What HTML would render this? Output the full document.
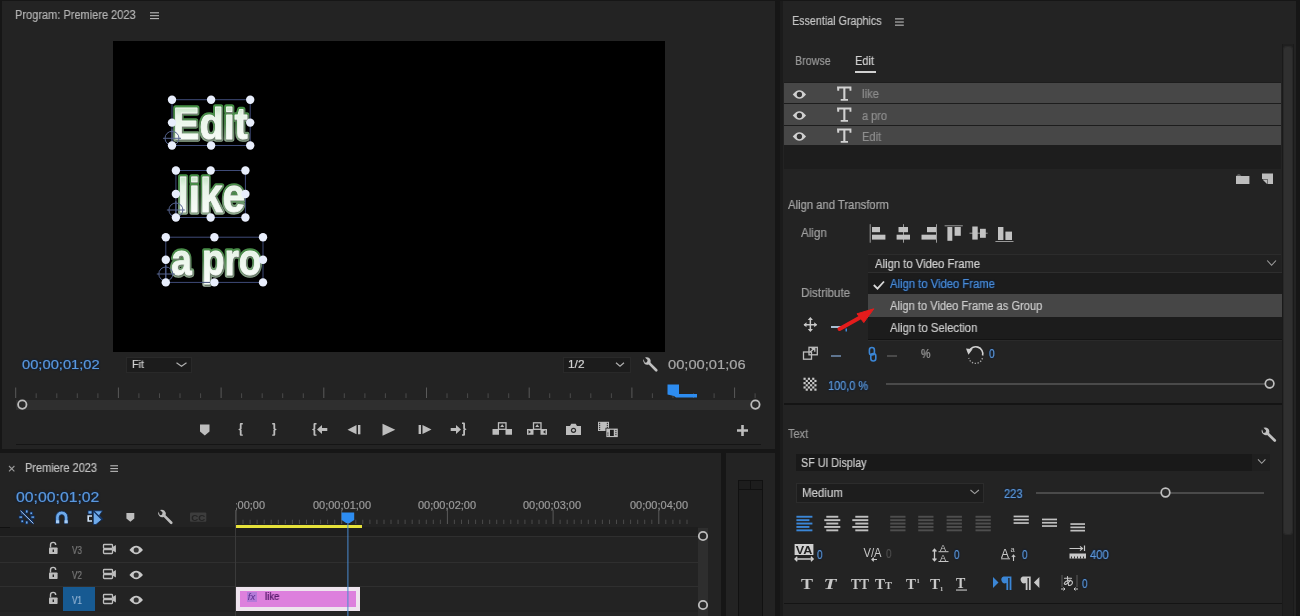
<!DOCTYPE html>
<html><head><meta charset="utf-8">
<style>
html,body{margin:0;padding:0;width:1300px;height:616px;overflow:hidden;background:#161616;}
body{position:relative;font-family:"Liberation Sans",sans-serif;color:#b4b4b4;}
.a{position:absolute;}
.t{position:absolute;white-space:nowrap;line-height:1;transform-origin:0 0;-webkit-text-stroke:0.2px currentColor;will-change:transform;}
.p{position:absolute;background:#232323;}
svg{position:absolute;overflow:visible;}
</style></head><body>

<!-- ===== Program monitor panel ===== -->
<div class="p" style="left:2px;top:1px;width:773px;height:448px;"></div>
<div class="a" style="left:113px;top:41px;width:552px;height:311px;background:#000;"></div>
<!-- dropdowns -->
<div class="a" style="left:126px;top:357px;width:64px;height:14px;background:#1c1c1c;border:1px solid #292929;"></div>
<div class="a" style="left:563px;top:357px;width:66px;height:14px;background:#1c1c1c;border:1px solid #292929;"></div>
<!-- scrub bar -->
<div class="a" style="left:16px;top:400px;width:744px;height:10px;background:#2f2f2f;"></div>
<!-- transport bottom line -->
<div class="a" style="left:16px;top:443.5px;width:745px;height:1.3px;background:#151515;"></div>

<!-- ===== Timeline panel ===== -->
<div class="p" style="left:0px;top:453px;width:721px;height:163px;"></div>
<div class="a" style="left:0px;top:527px;width:698px;height:8.5px;background:#1e1e1e;"></div><div class="a" style="left:0px;top:526.5px;width:10px;height:1px;background:#111;"></div>
<!-- track separators -->
<div class="a" style="left:0px;top:535.5px;width:698px;height:1px;background:#2f2f2f;"></div>
<div class="a" style="left:0px;top:561.5px;width:698px;height:1px;background:#2f2f2f;"></div>
<div class="a" style="left:0px;top:586px;width:698px;height:1px;background:#2f2f2f;"></div>
<div class="a" style="left:0px;top:611.5px;width:698px;height:5px;background:#262626;"></div>
<!-- V1 highlight -->
<div class="a" style="left:63px;top:587px;width:32px;height:24px;background:#175a92;"></div>
<!-- timeline start line -->
<div class="a" style="left:235px;top:510px;width:1px;height:106px;background:#3a3a3a;"></div>
<!-- vertical scrollbar -->
<div class="a" style="left:698px;top:528px;width:10px;height:88px;background:#2e2e2e;"></div>
<!-- yellow work area bar -->
<div class="a" style="left:236px;top:525px;width:126px;height:3px;background:#e6e23a;"></div>
<!-- clip -->
<div class="a" style="left:236px;top:587px;width:124px;height:24px;background:#eee4ee;"></div>
<div class="a" style="left:240px;top:590.5px;width:116px;height:16.5px;background:#dd80dd;"></div>
<div class="a" style="left:247px;top:592px;width:10px;height:9.5px;background:#b47ad8;"></div>

<!-- small audio meter panel -->
<div class="p" style="left:726px;top:453px;width:49px;height:163px;"></div>
<div class="a" style="left:737.5px;top:480px;width:25px;height:140px;background:#1d1d1d;border:1px solid #111;box-sizing:border-box;"></div>
<div class="a" style="left:738px;top:489px;width:24px;height:1px;background:#111;"></div>
<div class="a" style="left:750px;top:481px;width:1px;height:8px;background:#111;"></div>

<!-- ===== Essential graphics panel ===== -->
<div class="p" style="left:780px;top:1px;width:516px;height:615px;"></div>
<div class="a" style="left:780px;top:1px;width:3px;height:615px;background:#1b1b1b;"></div>
<!-- tab underline -->
<div class="a" style="left:855px;top:71px;width:21px;height:2px;background:#d0d0d0;"></div>
<!-- layer list -->
<div class="a" style="left:784px;top:82px;width:497px;height:87px;background:#1d1d1d;"></div>
<div class="a" style="left:784px;top:82.5px;width:497px;height:20.5px;background:#474747;"></div>
<div class="a" style="left:784px;top:104px;width:497px;height:20.5px;background:#474747;"></div>
<div class="a" style="left:784px;top:125.5px;width:497px;height:19.5px;background:#474747;"></div>
<!-- scrollbar -->
<div class="a" style="left:1281.5px;top:44px;width:12px;height:572px;background:#1f1f1f;border-left:1px solid #1a1a1a;border-right:1px solid #1a1a1a;box-sizing:border-box;"></div><div class="a" style="left:1282.5px;top:45.5px;width:10px;height:489px;background:#303030;border-radius:4px;box-shadow:inset 0 0 0 1px #282828;"></div>
<!-- align dropdown -->
<div class="a" style="left:868px;top:254px;width:413px;height:18px;background:#212121;border-top:1px solid #2c2c2c;"></div>
<!-- dropdown menu -->
<div class="a" style="left:868px;top:272px;width:414px;height:1px;background:#2e2e2e;"></div><div class="a" style="left:868px;top:273px;width:414px;height:65.5px;background:#1c1c1c;border-bottom:1.5px solid #131313;"></div><div class="a" style="left:868px;top:340px;width:414px;height:1px;background:#2a2a2a;"></div>
<div class="a" style="left:868px;top:294px;width:414px;height:22.5px;background:#464646;"></div>
<!-- blue dashes -->
<div class="a" style="left:830.5px;top:325.5px;width:10px;height:2px;background:#a9bdd2;"></div>
<div class="a" style="left:830.5px;top:355px;width:10px;height:1.8px;background:#5f7590;"></div>
<div class="a" style="left:886.5px;top:355px;width:10px;height:1.5px;background:#4a4a4a;"></div>
<!-- opacity slider -->
<div class="a" style="left:886px;top:383px;width:380px;height:2px;background:#4a4a4a;"></div>
<!-- separators -->
<div class="a" style="left:784px;top:403px;width:498px;height:2px;background:#141414;"></div>
<div class="a" style="left:784px;top:602.5px;width:498px;height:1.5px;background:#141414;"></div>
<!-- font dropdown -->
<div class="a" style="left:796px;top:453.5px;width:456px;height:17.5px;background:#191919;"></div>
<div class="a" style="left:1252px;top:453.5px;width:18px;height:17.5px;background:#1f1f1f;"></div>
<!-- medium dropdown -->
<div class="a" style="left:795.5px;top:483px;width:188px;height:19.5px;background:#1d1d1d;border:1px solid #2c2c2c;box-sizing:border-box;"></div>
<!-- size slider -->
<div class="a" style="left:1036px;top:491.5px;width:228px;height:2px;background:#4a4a4a;"></div>
<div class="t" style="left:14.78px;top:8.57px;font-size:12.5px;color:#b4b4b4;transform:scaleX(0.8811);">Program: Premiere 2023</div>
<div class="t" style="left:21.62px;top:358.24px;font-size:13.6px;color:#5b98de;transform:scaleX(1.0820);text-shadow:0 0 2px #0d2444,0 0 2px #0d2444;">00;00;01;02</div>
<div class="t" style="left:132.43px;top:358.93px;font-size:11.5px;color:#d2d2d2;transform:scaleX(0.9389);">Fit</div>
<div class="t" style="left:568.42px;top:358.93px;font-size:11.5px;color:#d2d2d2;transform:scaleX(1.0312);">1/2</div>
<div class="t" style="left:668.03px;top:358.01px;font-size:13.4px;color:#a8a8a8;transform:scaleX(1.0968);">00;00;01;06</div>
<div class="t" style="left:25.20px;top:461.80px;font-size:12px;color:#c0c0c0;transform:scaleX(0.9146);">Premiere 2023</div>
<div class="t" style="left:15.50px;top:489.70px;font-size:14px;color:#5b98de;transform:scaleX(1.1275);text-shadow:0 0 2px #0d2444,0 0 2px #0d2444;">00;00;01;02</div>
<div class="a" style="left:236.0px;top:497.79px;width:60px;height:14.6px;overflow:hidden"><div class="t" style="left:-28.93px;top:2px;font-size:10.6px;color:#9a9a9a;transform:scaleX(1.0363);">00;00;00;00</div></div>
<div class="t" style="left:312.77px;top:499.79px;font-size:10.6px;color:#9a9a9a;transform:scaleX(1.0363);">00;00;01;00</div>
<div class="t" style="left:417.97px;top:499.79px;font-size:10.6px;color:#9a9a9a;transform:scaleX(1.0363);">00;00;02;00</div>
<div class="t" style="left:523.47px;top:499.79px;font-size:10.6px;color:#9a9a9a;transform:scaleX(1.0363);">00;00;03;00</div>
<div class="t" style="left:629.77px;top:499.79px;font-size:10.6px;color:#9a9a9a;transform:scaleX(1.0363);">00;00;04;00</div>
<div class="t" style="left:72.40px;top:545.60px;font-size:10px;color:#7c7c7c;transform:scaleX(0.8010);">V3</div>
<div class="t" style="left:72.40px;top:570.80px;font-size:10px;color:#7c7c7c;transform:scaleX(0.8010);">V2</div>
<div class="t" style="left:72.40px;top:595.80px;font-size:10px;color:#93b3d3;transform:scaleX(0.8010);">V1</div>
<div class="t" style="left:265.00px;top:591.90px;font-size:10px;color:#4a1060;transform:scaleX(0.9523);">like</div>
<div class="t" style="left:791.98px;top:14.98px;font-size:12.5px;color:#c4c4c4;transform:scaleX(0.8597);">Essential Graphics</div>
<div class="t" style="left:794.58px;top:55.38px;font-size:12.5px;color:#9a9a9a;transform:scaleX(0.8564);">Browse</div>
<div class="t" style="left:855.08px;top:55.38px;font-size:12.5px;color:#d0d0d0;transform:scaleX(0.8818);">Edit</div>
<div class="t" style="left:862.30px;top:88.20px;font-size:12px;color:#8e8e8e;transform:scaleX(0.9492);">like</div>
<div class="t" style="left:862.30px;top:109.50px;font-size:12px;color:#8e8e8e;transform:scaleX(0.9101);">a pro</div>
<div class="t" style="left:862.30px;top:130.60px;font-size:12px;color:#8e8e8e;transform:scaleX(0.9233);">Edit</div>
<div class="t" style="left:788.18px;top:198.54px;font-size:12.3px;color:#a8a8a8;transform:scaleX(0.9160);">Align and Transform</div>
<div class="t" style="left:801.38px;top:226.74px;font-size:12.3px;color:#a0a0a0;transform:scaleX(0.9430);">Align</div>
<div class="t" style="left:874.99px;top:257.85px;font-size:12.3px;color:#d0d0d0;transform:scaleX(0.9170);">Align to Video Frame</div>
<div class="t" style="left:890.09px;top:277.55px;font-size:12.3px;color:#4a8cd8;transform:scaleX(0.9153);text-shadow:0 0 2px #0d2444,0 0 2px #0d2444;">Align to Video Frame</div>
<div class="t" style="left:890.09px;top:300.15px;font-size:12.3px;color:#cccccc;transform:scaleX(0.9033);">Align to Video Frame as Group</div>
<div class="t" style="left:890.09px;top:321.55px;font-size:12.3px;color:#cccccc;transform:scaleX(0.9186);">Align to Selection</div>
<div class="t" style="left:800.78px;top:287.35px;font-size:12.3px;color:#a0a0a0;transform:scaleX(0.9470);">Distribute</div>
<div class="t" style="left:920.70px;top:347.80px;font-size:12px;color:#a0a0a0;transform:scaleX(0.8808);">%</div>
<div class="t" style="left:988.98px;top:347.98px;font-size:12.5px;color:#5d97d8;transform:scaleX(0.8054);text-shadow:0 0 2px #0d2444,0 0 2px #0d2444;">0</div>
<div class="t" style="left:827.80px;top:379.70px;font-size:12px;color:#5d97d8;transform:scaleX(0.9127);text-shadow:0 0 2px #0d2444,0 0 2px #0d2444;">100,0 %</div>
<div class="t" style="left:788.38px;top:428.15px;font-size:12.3px;color:#9a9a9a;transform:scaleX(0.8864);">Text</div>
<div class="t" style="left:801.38px;top:456.55px;font-size:12.3px;color:#cccccc;transform:scaleX(0.8713);">SF UI Display</div>
<div class="t" style="left:801.68px;top:486.85px;font-size:12.3px;color:#cccccc;transform:scaleX(0.9349);">Medium</div>
<div class="t" style="left:1004.38px;top:487.85px;font-size:12.3px;color:#5d97d8;transform:scaleX(0.9059);text-shadow:0 0 2px #0d2444,0 0 2px #0d2444;">223</div>
<div class="t" style="left:817.38px;top:548.58px;font-size:12.5px;color:#5d97d8;transform:scaleX(0.7766);text-shadow:0 0 2px #0d2444,0 0 2px #0d2444;">0</div>
<div class="t" style="left:885.98px;top:547.98px;font-size:12.5px;color:#505050;transform:scaleX(0.7766);">0</div>
<div class="t" style="left:953.98px;top:548.58px;font-size:12.5px;color:#5d97d8;transform:scaleX(0.7766);text-shadow:0 0 2px #0d2444,0 0 2px #0d2444;">0</div>
<div class="t" style="left:1022.38px;top:548.58px;font-size:12.5px;color:#5d97d8;transform:scaleX(0.7766);text-shadow:0 0 2px #0d2444,0 0 2px #0d2444;">0</div>
<div class="t" style="left:1090.38px;top:548.58px;font-size:12.5px;color:#5d97d8;transform:scaleX(0.8917);text-shadow:0 0 2px #0d2444,0 0 2px #0d2444;">400</div>
<div class="t" style="left:1082.38px;top:577.98px;font-size:12.5px;color:#5d97d8;transform:scaleX(0.7766);text-shadow:0 0 2px #0d2444,0 0 2px #0d2444;">0</div><svg width="1300" height="616" style="left:0;top:0"><rect x="150" y="12.20" width="9" height="1.15" fill="#b4b4b4"/><rect x="150" y="15.10" width="9" height="1.15" fill="#b4b4b4"/><rect x="150" y="18.00" width="9" height="1.15" fill="#b4b4b4"/><line x1="15.7" y1="387.5" x2="15.7" y2="398" stroke="#5a5a5a" stroke-width="1"/><line x1="36.2" y1="393.3" x2="36.2" y2="398" stroke="#4a4a4a" stroke-width="1"/><line x1="56.8" y1="393.3" x2="56.8" y2="398" stroke="#4a4a4a" stroke-width="1"/><line x1="77.3" y1="393.3" x2="77.3" y2="398" stroke="#4a4a4a" stroke-width="1"/><line x1="97.9" y1="393.3" x2="97.9" y2="398" stroke="#4a4a4a" stroke-width="1"/><line x1="118.4" y1="387.5" x2="118.4" y2="398" stroke="#5a5a5a" stroke-width="1"/><line x1="138.9" y1="393.3" x2="138.9" y2="398" stroke="#4a4a4a" stroke-width="1"/><line x1="159.5" y1="393.3" x2="159.5" y2="398" stroke="#4a4a4a" stroke-width="1"/><line x1="180.0" y1="393.3" x2="180.0" y2="398" stroke="#4a4a4a" stroke-width="1"/><line x1="200.6" y1="393.3" x2="200.6" y2="398" stroke="#4a4a4a" stroke-width="1"/><line x1="221.1" y1="387.5" x2="221.1" y2="398" stroke="#5a5a5a" stroke-width="1"/><line x1="241.6" y1="393.3" x2="241.6" y2="398" stroke="#4a4a4a" stroke-width="1"/><line x1="262.2" y1="393.3" x2="262.2" y2="398" stroke="#4a4a4a" stroke-width="1"/><line x1="282.7" y1="393.3" x2="282.7" y2="398" stroke="#4a4a4a" stroke-width="1"/><line x1="303.3" y1="393.3" x2="303.3" y2="398" stroke="#4a4a4a" stroke-width="1"/><line x1="323.8" y1="387.5" x2="323.8" y2="398" stroke="#5a5a5a" stroke-width="1"/><line x1="344.3" y1="393.3" x2="344.3" y2="398" stroke="#4a4a4a" stroke-width="1"/><line x1="364.9" y1="393.3" x2="364.9" y2="398" stroke="#4a4a4a" stroke-width="1"/><line x1="385.4" y1="393.3" x2="385.4" y2="398" stroke="#4a4a4a" stroke-width="1"/><line x1="406.0" y1="393.3" x2="406.0" y2="398" stroke="#4a4a4a" stroke-width="1"/><line x1="426.5" y1="387.5" x2="426.5" y2="398" stroke="#5a5a5a" stroke-width="1"/><line x1="447.0" y1="393.3" x2="447.0" y2="398" stroke="#4a4a4a" stroke-width="1"/><line x1="467.6" y1="393.3" x2="467.6" y2="398" stroke="#4a4a4a" stroke-width="1"/><line x1="488.1" y1="393.3" x2="488.1" y2="398" stroke="#4a4a4a" stroke-width="1"/><line x1="508.7" y1="393.3" x2="508.7" y2="398" stroke="#4a4a4a" stroke-width="1"/><line x1="529.2" y1="387.5" x2="529.2" y2="398" stroke="#5a5a5a" stroke-width="1"/><line x1="549.7" y1="393.3" x2="549.7" y2="398" stroke="#4a4a4a" stroke-width="1"/><line x1="570.3" y1="393.3" x2="570.3" y2="398" stroke="#4a4a4a" stroke-width="1"/><line x1="590.8" y1="393.3" x2="590.8" y2="398" stroke="#4a4a4a" stroke-width="1"/><line x1="611.4" y1="393.3" x2="611.4" y2="398" stroke="#4a4a4a" stroke-width="1"/><line x1="631.9" y1="387.5" x2="631.9" y2="398" stroke="#5a5a5a" stroke-width="1"/><line x1="652.4" y1="393.3" x2="652.4" y2="398" stroke="#4a4a4a" stroke-width="1"/><line x1="673.0" y1="393.3" x2="673.0" y2="398" stroke="#4a4a4a" stroke-width="1"/><line x1="693.5" y1="393.3" x2="693.5" y2="398" stroke="#4a4a4a" stroke-width="1"/><line x1="714.1" y1="393.3" x2="714.1" y2="398" stroke="#4a4a4a" stroke-width="1"/><line x1="734.6" y1="387.5" x2="734.6" y2="398" stroke="#5a5a5a" stroke-width="1"/><line x1="755.1" y1="393.3" x2="755.1" y2="398" stroke="#4a4a4a" stroke-width="1"/><polyline points="176.5,362.8 181.5,366.2 186.5,362.8" fill="none" stroke="#b0b0b0" stroke-width="1.2"/><polyline points="616,362.8 620.0,366.2 624,362.8" fill="none" stroke="#b0b0b0" stroke-width="1.2"/><g transform="translate(642,357.5) scale(1.0)" fill="#c0c0c0"><path d="M1.5,1.5 a4.2,4.2 0 0 0 5.2,5.6 l6.6,6.6 a1.3,1.3 0 0 0 1.9,-1.9 l-6.6,-6.6 a4.2,4.2 0 0 0 -5.6,-5.2 l2.6,2.6 -0.6,2.1 -2.1,0.6z"/></g><path d="M667.5,384.5 h11.5 v9.5 h18 v3.5 h-21 l-2,-1.5 -6.5,-1.5z" fill="#2d8cf0"/><circle cx="22.3" cy="404.6" r="4.2" fill="#2a2a2a" stroke="#bdbdbd" stroke-width="1.8"/><circle cx="755.4" cy="404.6" r="4.2" fill="#2a2a2a" stroke="#bdbdbd" stroke-width="1.8"/><path d="M200,424.5 h9.5 v7 l-4.75,4 -4.75,-4z" fill="#bdbdbd"/><path d="M242.8,423 h-2 q-1,0 -1,1.2 v4.3 l-1.6,1 1.6,1 v4.3 q0,1 1,1 h2 v-1.4 h-1.2 v-4.4 l-0.8,-0.5 0.8,-0.5 v-4.4 h1.2z" fill="#bdbdbd"/><path d="M272.2,423 h2 q1,0 1,1.2 v4.3 l1.6,1 -1.6,1 v4.3 q0,1 -1,1 h-2 v-1.4 h1.2 v-4.4 l0.8,-0.5 -0.8,-0.5 v-4.4 h-1.2z" fill="#bdbdbd"/><path d="M316.5,423 h-2 q-1,0 -1,1.2 v4.3 l-1.6,1 1.6,1 v4.3 q0,1 1,1 h2 v-1.4 h-1.2 v-4.4 l-0.8,-0.5 0.8,-0.5 v-4.4 h1.2z" fill="#bdbdbd"/><path d="M317,429.5 l5,-4.5 v3 h5.3 v3 h-5.3 v3z" fill="#bdbdbd"/><path d="M347.5,429.7 l9,-4.6 v9.2z" fill="#bdbdbd"/><rect x="358" y="425" width="2.4" height="9.3" fill="#bdbdbd"/><path d="M382.5,423.8 l12.8,6 -12.8,6z" fill="#bdbdbd"/><rect x="418.6" y="425" width="2.4" height="9" fill="#bdbdbd"/><path d="M422.5,425 l9,4.5 -9,4.5z" fill="#bdbdbd"/><path d="M461,429.5 l-5,-4.5 v3 h-5.3 v3 h5.3 v3z" fill="#bdbdbd"/><path d="M462,422.5 h2 q1,0 1,1.2 v4.5 l1.6,1 -1.6,1 v4.5 q0,1 -1,1 h-2 v-1.4 h1.2 v-4.6 l0.8,-0.5 -0.8,-0.5 v-4.6 h-1.2z" fill="#bdbdbd"/><path d="M492.5,429 h6.5 v5.8 h-6.5z M505.5,429 h6.5 v5.8 h-6.5z" fill="#bdbdbd"/><rect x="498.5" y="422.8" width="7.5" height="6.5" fill="none" stroke="#bdbdbd" stroke-width="1.3"/><path d="M502.2,424.3 l2,2.6 h-4z" fill="#bdbdbd"/><path d="M527,429 h6.5 v5.8 h-6.5z M540.5,429 h6.5 v5.8 h-6.5z" fill="#bdbdbd"/><rect x="533.5" y="422.8" width="7.5" height="6.5" fill="none" stroke="#bdbdbd" stroke-width="1.3"/><path d="M537.2,424.3 l2,2.6 h-4z" fill="#bdbdbd"/><path d="M528.5,430 l2.5,1.9 -2.5,1.9z M545.5,430 l-2.5,1.9 2.5,1.9z" fill="#2a2a2a"/><path d="M566,426 h4 l1.3,-2.2 h4.4 l1.3,2.2 h4 v9 h-15z" fill="#bdbdbd"/><circle cx="573.5" cy="430.3" r="2.6" fill="#2a2a2a"/><circle cx="573.5" cy="430.3" r="1.4" fill="#bdbdbd"/><rect x="598" y="421.8" width="11" height="9.2" fill="#bdbdbd"/><g fill="#3a3a3a"><rect x="599" y="422.8" width="1.2" height="1.2"/><rect x="599" y="424.8" width="1.2" height="1.2"/><rect x="599" y="426.8" width="1.2" height="1.2"/><rect x="599" y="428.8" width="1.2" height="1.2"/><rect x="606.8" y="422.8" width="1.2" height="1.2"/><rect x="606.8" y="424.8" width="1.2" height="1.2"/><rect x="606.8" y="426.8" width="1.2" height="1.2"/><rect x="606.8" y="428.8" width="1.2" height="1.2"/></g><rect x="605.5" y="427.8" width="13" height="10" fill="#232323"/><rect x="606.3" y="428.6" width="11.5" height="8.5" fill="#bdbdbd"/><rect x="610" y="429.8" width="3.8" height="6.2" fill="#1e1e1e"/><g fill="#3a3a3a"><rect x="607.3" y="432.5" width="1.2" height="1.2"/><rect x="607.3" y="434.5" width="1.2" height="1.2"/><rect x="615.3" y="430" width="1.2" height="1.2"/><rect x="615.3" y="432" width="1.2" height="1.2"/><rect x="615.3" y="434" width="1.2" height="1.2"/></g><path d="M741.2,425 h2.6 v4.2 h4.2 v2.6 h-4.2 v4.2 h-2.6 v-4.2 h-4.2 v-2.6 h4.2z" fill="#bdbdbd"/><defs><linearGradient id="g1" x1="0" y1="0" x2="0" y2="1"><stop offset="0" stop-color="#a6d6a6"/><stop offset="0.35" stop-color="#e6f4e6"/><stop offset="1" stop-color="#ffffff"/></linearGradient><linearGradient id="g2" x1="0" y1="0" x2="0" y2="1"><stop offset="0" stop-color="#3e903e"/><stop offset="0.5" stop-color="#4f8a4f"/><stop offset="1" stop-color="#a9b8a9"/></linearGradient></defs><text x="173.1" y="139" font-family="Liberation Sans" font-weight="bold" font-size="45" textLength="74.7" lengthAdjust="spacingAndGlyphs" stroke-linejoin="round" fill="url(#g2)" stroke="url(#g2)" stroke-width="5.5">Edit</text><text x="173.1" y="139" font-family="Liberation Sans" font-weight="bold" font-size="45" textLength="74.7" lengthAdjust="spacingAndGlyphs" stroke-linejoin="round" fill="#6f7f6f" stroke="#6f7f6f" stroke-width="2" transform="translate(0.7,0.7)">Edit</text><text x="173.1" y="139" font-family="Liberation Sans" font-weight="bold" font-size="45" textLength="74.7" lengthAdjust="spacingAndGlyphs" stroke-linejoin="round" fill="url(#g1)" stroke="#f2f9f2" stroke-width="0.9">Edit</text><text x="177.4" y="211.5" font-family="Liberation Sans" font-weight="bold" font-size="49" textLength="67.5" lengthAdjust="spacingAndGlyphs" stroke-linejoin="round" fill="url(#g2)" stroke="url(#g2)" stroke-width="5.5">like</text><text x="177.4" y="211.5" font-family="Liberation Sans" font-weight="bold" font-size="49" textLength="67.5" lengthAdjust="spacingAndGlyphs" stroke-linejoin="round" fill="#6f7f6f" stroke="#6f7f6f" stroke-width="2" transform="translate(0.7,0.7)">like</text><text x="177.4" y="211.5" font-family="Liberation Sans" font-weight="bold" font-size="49" textLength="67.5" lengthAdjust="spacingAndGlyphs" stroke-linejoin="round" fill="url(#g1)" stroke="#f2f9f2" stroke-width="0.9">like</text><text x="171.3" y="275" font-family="Liberation Sans" font-weight="bold" font-size="45" textLength="90" lengthAdjust="spacingAndGlyphs" stroke-linejoin="round" fill="url(#g2)" stroke="url(#g2)" stroke-width="5.5">a pro</text><text x="171.3" y="275" font-family="Liberation Sans" font-weight="bold" font-size="45" textLength="90" lengthAdjust="spacingAndGlyphs" stroke-linejoin="round" fill="#6f7f6f" stroke="#6f7f6f" stroke-width="2" transform="translate(0.7,0.7)">a pro</text><text x="171.3" y="275" font-family="Liberation Sans" font-weight="bold" font-size="45" textLength="90" lengthAdjust="spacingAndGlyphs" stroke-linejoin="round" fill="url(#g1)" stroke="#f2f9f2" stroke-width="0.9">a pro</text><rect x="172" y="99.7" width="78.19999999999999" height="45.8" fill="none" stroke="#3f4b78" stroke-width="1"/><circle cx="172" cy="138.3" r="7" fill="none" stroke="#56648f" stroke-width="1"/><line x1="163" y1="138.3" x2="181" y2="138.3" stroke="#56648f" stroke-width="1"/><line x1="172" y1="129.3" x2="172" y2="147.3" stroke="#56648f" stroke-width="1"/><circle cx="172" cy="99.7" r="4.2" fill="#e8eefc"/><circle cx="211.1" cy="99.7" r="4.2" fill="#e8eefc"/><circle cx="250.2" cy="99.7" r="4.2" fill="#e8eefc"/><circle cx="172" cy="122.6" r="4.2" fill="#e8eefc"/><circle cx="250.2" cy="122.6" r="4.2" fill="#e8eefc"/><circle cx="172" cy="145.5" r="4.2" fill="#e8eefc"/><circle cx="211.1" cy="145.5" r="4.2" fill="#e8eefc"/><circle cx="250.2" cy="145.5" r="4.2" fill="#e8eefc"/><rect x="175.9" y="170.5" width="69.5" height="47.0" fill="none" stroke="#3f4b78" stroke-width="1"/><circle cx="175.9" cy="210" r="7" fill="none" stroke="#56648f" stroke-width="1"/><line x1="166.9" y1="210" x2="184.9" y2="210" stroke="#56648f" stroke-width="1"/><line x1="175.9" y1="201" x2="175.9" y2="219" stroke="#56648f" stroke-width="1"/><circle cx="175.9" cy="170.5" r="4.2" fill="#e8eefc"/><circle cx="210.65" cy="170.5" r="4.2" fill="#e8eefc"/><circle cx="245.4" cy="170.5" r="4.2" fill="#e8eefc"/><circle cx="175.9" cy="194.0" r="4.2" fill="#e8eefc"/><circle cx="245.4" cy="194.0" r="4.2" fill="#e8eefc"/><circle cx="175.9" cy="217.5" r="4.2" fill="#e8eefc"/><circle cx="210.65" cy="217.5" r="4.2" fill="#e8eefc"/><circle cx="245.4" cy="217.5" r="4.2" fill="#e8eefc"/><rect x="165.8" y="237.2" width="97.19999999999999" height="45.19999999999999" fill="none" stroke="#3f4b78" stroke-width="1"/><circle cx="165.8" cy="274" r="7" fill="none" stroke="#56648f" stroke-width="1"/><line x1="156.8" y1="274" x2="174.8" y2="274" stroke="#56648f" stroke-width="1"/><line x1="165.8" y1="265" x2="165.8" y2="283" stroke="#56648f" stroke-width="1"/><circle cx="165.8" cy="237.2" r="4.2" fill="#e8eefc"/><circle cx="214.4" cy="237.2" r="4.2" fill="#e8eefc"/><circle cx="263" cy="237.2" r="4.2" fill="#e8eefc"/><circle cx="165.8" cy="259.79999999999995" r="4.2" fill="#e8eefc"/><circle cx="263" cy="259.79999999999995" r="4.2" fill="#e8eefc"/><circle cx="165.8" cy="282.4" r="4.2" fill="#e8eefc"/><circle cx="214.4" cy="282.4" r="4.2" fill="#e8eefc"/><circle cx="263" cy="282.4" r="4.2" fill="#e8eefc"/><path d="M9,466 l5.4,5.4 M14.4,466 l-5.4,5.4" stroke="#9a9a9a" stroke-width="1.1"/><rect x="110.3" y="465.20" width="7.7" height="1.15" fill="#b4b4b4"/><rect x="110.3" y="468.00" width="7.7" height="1.15" fill="#b4b4b4"/><rect x="110.3" y="470.80" width="7.7" height="1.15" fill="#b4b4b4"/><line x1="236.0" y1="510" x2="236.0" y2="524" stroke="#5a5a5a" stroke-width="1"/><line x1="243.0" y1="519.7" x2="243.0" y2="524" stroke="#4a4a4a" stroke-width="1"/><line x1="250.1" y1="519.7" x2="250.1" y2="524" stroke="#4a4a4a" stroke-width="1"/><line x1="257.1" y1="519.7" x2="257.1" y2="524" stroke="#4a4a4a" stroke-width="1"/><line x1="264.2" y1="519.7" x2="264.2" y2="524" stroke="#4a4a4a" stroke-width="1"/><line x1="271.2" y1="519.7" x2="271.2" y2="524" stroke="#4a4a4a" stroke-width="1"/><line x1="278.3" y1="519.7" x2="278.3" y2="524" stroke="#4a4a4a" stroke-width="1"/><line x1="285.3" y1="519.7" x2="285.3" y2="524" stroke="#4a4a4a" stroke-width="1"/><line x1="292.4" y1="519.7" x2="292.4" y2="524" stroke="#4a4a4a" stroke-width="1"/><line x1="299.4" y1="519.7" x2="299.4" y2="524" stroke="#4a4a4a" stroke-width="1"/><line x1="306.5" y1="519.7" x2="306.5" y2="524" stroke="#4a4a4a" stroke-width="1"/><line x1="313.5" y1="519.7" x2="313.5" y2="524" stroke="#4a4a4a" stroke-width="1"/><line x1="320.6" y1="519.7" x2="320.6" y2="524" stroke="#4a4a4a" stroke-width="1"/><line x1="327.6" y1="519.7" x2="327.6" y2="524" stroke="#4a4a4a" stroke-width="1"/><line x1="334.7" y1="519.7" x2="334.7" y2="524" stroke="#4a4a4a" stroke-width="1"/><line x1="341.7" y1="510" x2="341.7" y2="524" stroke="#5a5a5a" stroke-width="1"/><line x1="348.7" y1="519.7" x2="348.7" y2="524" stroke="#4a4a4a" stroke-width="1"/><line x1="355.8" y1="519.7" x2="355.8" y2="524" stroke="#4a4a4a" stroke-width="1"/><line x1="362.8" y1="519.7" x2="362.8" y2="524" stroke="#4a4a4a" stroke-width="1"/><line x1="369.9" y1="519.7" x2="369.9" y2="524" stroke="#4a4a4a" stroke-width="1"/><line x1="376.9" y1="519.7" x2="376.9" y2="524" stroke="#4a4a4a" stroke-width="1"/><line x1="384.0" y1="519.7" x2="384.0" y2="524" stroke="#4a4a4a" stroke-width="1"/><line x1="391.0" y1="519.7" x2="391.0" y2="524" stroke="#4a4a4a" stroke-width="1"/><line x1="398.1" y1="519.7" x2="398.1" y2="524" stroke="#4a4a4a" stroke-width="1"/><line x1="405.1" y1="519.7" x2="405.1" y2="524" stroke="#4a4a4a" stroke-width="1"/><line x1="412.2" y1="519.7" x2="412.2" y2="524" stroke="#4a4a4a" stroke-width="1"/><line x1="419.2" y1="519.7" x2="419.2" y2="524" stroke="#4a4a4a" stroke-width="1"/><line x1="426.3" y1="519.7" x2="426.3" y2="524" stroke="#4a4a4a" stroke-width="1"/><line x1="433.3" y1="519.7" x2="433.3" y2="524" stroke="#4a4a4a" stroke-width="1"/><line x1="440.4" y1="519.7" x2="440.4" y2="524" stroke="#4a4a4a" stroke-width="1"/><line x1="447.4" y1="510" x2="447.4" y2="524" stroke="#5a5a5a" stroke-width="1"/><line x1="454.4" y1="519.7" x2="454.4" y2="524" stroke="#4a4a4a" stroke-width="1"/><line x1="461.5" y1="519.7" x2="461.5" y2="524" stroke="#4a4a4a" stroke-width="1"/><line x1="468.5" y1="519.7" x2="468.5" y2="524" stroke="#4a4a4a" stroke-width="1"/><line x1="475.6" y1="519.7" x2="475.6" y2="524" stroke="#4a4a4a" stroke-width="1"/><line x1="482.6" y1="519.7" x2="482.6" y2="524" stroke="#4a4a4a" stroke-width="1"/><line x1="489.7" y1="519.7" x2="489.7" y2="524" stroke="#4a4a4a" stroke-width="1"/><line x1="496.7" y1="519.7" x2="496.7" y2="524" stroke="#4a4a4a" stroke-width="1"/><line x1="503.8" y1="519.7" x2="503.8" y2="524" stroke="#4a4a4a" stroke-width="1"/><line x1="510.8" y1="519.7" x2="510.8" y2="524" stroke="#4a4a4a" stroke-width="1"/><line x1="517.9" y1="519.7" x2="517.9" y2="524" stroke="#4a4a4a" stroke-width="1"/><line x1="524.9" y1="519.7" x2="524.9" y2="524" stroke="#4a4a4a" stroke-width="1"/><line x1="532.0" y1="519.7" x2="532.0" y2="524" stroke="#4a4a4a" stroke-width="1"/><line x1="539.0" y1="519.7" x2="539.0" y2="524" stroke="#4a4a4a" stroke-width="1"/><line x1="546.1" y1="519.7" x2="546.1" y2="524" stroke="#4a4a4a" stroke-width="1"/><line x1="553.1" y1="510" x2="553.1" y2="524" stroke="#5a5a5a" stroke-width="1"/><line x1="560.1" y1="519.7" x2="560.1" y2="524" stroke="#4a4a4a" stroke-width="1"/><line x1="567.2" y1="519.7" x2="567.2" y2="524" stroke="#4a4a4a" stroke-width="1"/><line x1="574.2" y1="519.7" x2="574.2" y2="524" stroke="#4a4a4a" stroke-width="1"/><line x1="581.3" y1="519.7" x2="581.3" y2="524" stroke="#4a4a4a" stroke-width="1"/><line x1="588.3" y1="519.7" x2="588.3" y2="524" stroke="#4a4a4a" stroke-width="1"/><line x1="595.4" y1="519.7" x2="595.4" y2="524" stroke="#4a4a4a" stroke-width="1"/><line x1="602.4" y1="519.7" x2="602.4" y2="524" stroke="#4a4a4a" stroke-width="1"/><line x1="609.5" y1="519.7" x2="609.5" y2="524" stroke="#4a4a4a" stroke-width="1"/><line x1="616.5" y1="519.7" x2="616.5" y2="524" stroke="#4a4a4a" stroke-width="1"/><line x1="623.6" y1="519.7" x2="623.6" y2="524" stroke="#4a4a4a" stroke-width="1"/><line x1="630.6" y1="519.7" x2="630.6" y2="524" stroke="#4a4a4a" stroke-width="1"/><line x1="637.7" y1="519.7" x2="637.7" y2="524" stroke="#4a4a4a" stroke-width="1"/><line x1="644.7" y1="519.7" x2="644.7" y2="524" stroke="#4a4a4a" stroke-width="1"/><line x1="651.8" y1="519.7" x2="651.8" y2="524" stroke="#4a4a4a" stroke-width="1"/><line x1="658.8" y1="510" x2="658.8" y2="524" stroke="#5a5a5a" stroke-width="1"/><line x1="665.8" y1="519.7" x2="665.8" y2="524" stroke="#4a4a4a" stroke-width="1"/><line x1="672.9" y1="519.7" x2="672.9" y2="524" stroke="#4a4a4a" stroke-width="1"/><line x1="679.9" y1="519.7" x2="679.9" y2="524" stroke="#4a4a4a" stroke-width="1"/><line x1="687.0" y1="519.7" x2="687.0" y2="524" stroke="#4a4a4a" stroke-width="1"/><path d="M341.6,512.5 h12.6 v7.5 l-4.5,3 h-3.6 l-4.5,-3z" fill="#2d8cf0"/><rect x="347.4" y="522" width="1" height="94" fill="#4a8ad0"/><circle cx="703" cy="536" r="4.2" fill="#2a2a2a" stroke="#bdbdbd" stroke-width="1.8"/><circle cx="703" cy="605" r="4.2" fill="#2a2a2a" stroke="#bdbdbd" stroke-width="1.8"/><g fill="#6eaaea" stroke="#0d2c5c" stroke-width="0.8"><rect x="25.6" y="510" width="2.4" height="3"/><rect x="25.6" y="521" width="2.4" height="3"/><rect x="19" y="516" width="3.5" height="2.2"/><rect x="31" y="516" width="3.5" height="2.2"/><rect x="21" y="512" width="2.6" height="2.6"/><rect x="30" y="512" width="2.6" height="2.6"/><rect x="21" y="520" width="2.6" height="2.6"/><rect x="30" y="520" width="2.6" height="2.6"/></g><path d="M20.5,510.8 L33.5,523.6" stroke="#0d2c5c" stroke-width="2.6"/><path d="M20.5,510.8 L33.5,523.6" stroke="#b8d4f4" stroke-width="1"/><path d="M55.6,523.6 v-6.4 a6.15,6.15 0 0 1 12.3,0 v6.4 h-3.6 v-6.4 a2.55,2.55 0 0 0 -5.1,0 v6.4z" fill="#6eaaea" stroke="#0d2c5c" stroke-width="0.8"/><rect x="56" y="520.3" width="3.2" height="3" fill="#a9cdf3"/><rect x="64.5" y="520.3" width="3.2" height="3" fill="#a9cdf3"/><rect x="88" y="510.8" width="4" height="3.2" fill="#6eaaea" stroke="#0d2c5c" stroke-width="0.8"/><path d="M92,516 h-3.8 v5 h3.8" fill="none" stroke="#d0e2f6" stroke-width="1.6"/><path d="M93.3,510.8 h9.2 l-3.2,4.6 3.2,3.6 -6.5,5.5 h-2.7z" fill="#6eaaea" stroke="#0d2c5c" stroke-width="0.8"/><path d="M93.5,511 L102.5,520" stroke="#0d2c5c" stroke-width="1.3"/><path d="M126.4,513 h7.9 v5.6 l-3.95,3.2 -3.95,-3.2z" fill="#bdbdbd"/><g transform="translate(157,510) scale(1.0)" fill="#bdbdbd"><path d="M1.5,1.5 a4.2,4.2 0 0 0 5.2,5.6 l6.6,6.6 a1.3,1.3 0 0 0 1.9,-1.9 l-6.6,-6.6 a4.2,4.2 0 0 0 -5.6,-5.2 l2.6,2.6 -0.6,2.1 -2.1,0.6z"/></g><rect x="190" y="512.6" width="16.3" height="9.2" rx="1" fill="#3d3d3d"/><text x="191.3" y="520.9" font-family="Liberation Sans" font-weight="bold" font-size="9.5" fill="#232323" textLength="14" lengthAdjust="spacingAndGlyphs">CC</text><rect x="49" y="547.5" width="8.6" height="6.5" rx="0.8" fill="#bdbdbd"/><path d="M50.5,547.5 v-2.5 a2.6,2.6 0 0 1 5.2,0" stroke="#bdbdbd" stroke-width="1.4" fill="none"/><rect x="52.6" y="549.5" width="1.4" height="2.5" fill="#232323"/><rect x="103.5" y="544.5" width="9" height="4" rx="0.8" fill="none" stroke="#bdbdbd" stroke-width="1.3"/><rect x="103.5" y="549.5" width="9" height="4" rx="0.8" fill="none" stroke="#bdbdbd" stroke-width="1.3"/><path d="M112.5,547.0 l3.4,-2 v7.5 l-3.4,-2z" fill="#bdbdbd"/><path d="M129.45,550.0 Q136.2,541.7 142.95,550.0 Q136.2,558.3 129.45,550.0Z" fill="#c8c8c8"/><circle cx="136.2" cy="550.0" r="2.57" fill="#333"/><rect x="49" y="572.5" width="8.6" height="6.5" rx="0.8" fill="#bdbdbd"/><path d="M50.5,572.5 v-2.5 a2.6,2.6 0 0 1 5.2,0" stroke="#bdbdbd" stroke-width="1.4" fill="none"/><rect x="52.6" y="574.5" width="1.4" height="2.5" fill="#232323"/><rect x="103.5" y="569.5" width="9" height="4" rx="0.8" fill="none" stroke="#bdbdbd" stroke-width="1.3"/><rect x="103.5" y="574.5" width="9" height="4" rx="0.8" fill="none" stroke="#bdbdbd" stroke-width="1.3"/><path d="M112.5,572.0 l3.4,-2 v7.5 l-3.4,-2z" fill="#bdbdbd"/><path d="M129.45,575.0 Q136.2,566.7 142.95,575.0 Q136.2,583.3 129.45,575.0Z" fill="#c8c8c8"/><circle cx="136.2" cy="575.0" r="2.57" fill="#333"/><rect x="49" y="597.5" width="8.6" height="6.5" rx="0.8" fill="#bdbdbd"/><path d="M50.5,597.5 v-2.5 a2.6,2.6 0 0 1 5.2,0" stroke="#bdbdbd" stroke-width="1.4" fill="none"/><rect x="52.6" y="599.5" width="1.4" height="2.5" fill="#232323"/><rect x="103.5" y="594.5" width="9" height="4" rx="0.8" fill="none" stroke="#bdbdbd" stroke-width="1.3"/><rect x="103.5" y="599.5" width="9" height="4" rx="0.8" fill="none" stroke="#bdbdbd" stroke-width="1.3"/><path d="M112.5,597.0 l3.4,-2 v7.5 l-3.4,-2z" fill="#bdbdbd"/><path d="M129.45,600.0 Q136.2,591.7 142.95,600.0 Q136.2,608.3 129.45,600.0Z" fill="#c8c8c8"/><circle cx="136.2" cy="600.0" r="2.57" fill="#333"/><text x="247.8" y="600.3" font-family="Liberation Sans" font-style="italic" font-size="9.5" fill="#5a2a8a">fx</text><rect x="895" y="18.30" width="8.8" height="1.15" fill="#b4b4b4"/><rect x="895" y="21.45" width="8.8" height="1.15" fill="#b4b4b4"/><rect x="895" y="24.60" width="8.8" height="1.15" fill="#b4b4b4"/><path d="M792.75,94.5 Q799.4,86.0 806.05,94.5 Q799.4,103.0 792.75,94.5Z" fill="#d0d0d0"/><circle cx="799.4" cy="94.5" r="2.63" fill="#333"/><path d="M837,86.5 h14.4 v4.2 h-1.9 v-2.2 h-4.1 v10.4 h2.6 v1.9 h-7.3 v-1.9 h2.6 v-10.4 h-4.1 v2.2 h-1.9z" fill="#d2d2d2"/><path d="M792.75,115.5 Q799.4,107.0 806.05,115.5 Q799.4,124.0 792.75,115.5Z" fill="#d0d0d0"/><circle cx="799.4" cy="115.5" r="2.63" fill="#333"/><path d="M837,107.5 h14.4 v4.2 h-1.9 v-2.2 h-4.1 v10.4 h2.6 v1.9 h-7.3 v-1.9 h2.6 v-10.4 h-4.1 v2.2 h-1.9z" fill="#d2d2d2"/><path d="M792.75,136.5 Q799.4,128.0 806.05,136.5 Q799.4,145.0 792.75,136.5Z" fill="#d0d0d0"/><circle cx="799.4" cy="136.5" r="2.63" fill="#333"/><path d="M837,128.5 h14.4 v4.2 h-1.9 v-2.2 h-4.1 v10.4 h2.6 v1.9 h-7.3 v-1.9 h2.6 v-10.4 h-4.1 v2.2 h-1.9z" fill="#d2d2d2"/><rect x="1236" y="176" width="13.4" height="8" fill="#bdbdbd"/><path d="M1236.2,175.5 q2.6,-2.2 5.2,0z" fill="#9a9a9a"/><path d="M1262,173.6 h11 v10.4 h-5.5 v-5 h-5.5z" fill="#bdbdbd"/><path d="M1262.5,179.5 h4.5 v4.5z" fill="#bdbdbd"/><rect x="869.7" y="224.2" width="1" height="18.5" fill="#9a9a9a"/><rect x="872" y="227" width="8" height="5.2" fill="#c2c2c2"/><rect x="872" y="234.7" width="13.4" height="4.9" fill="#c2c2c2"/><rect x="903" y="224.2" width="1" height="18.5" fill="#9a9a9a"/><rect x="898.5" y="227" width="9.5" height="5.2" fill="#c2c2c2"/><rect x="896.6" y="234.7" width="13.4" height="4.9" fill="#c2c2c2"/><rect x="936" y="224.2" width="1" height="18.5" fill="#9a9a9a"/><rect x="927" y="227" width="9" height="5.2" fill="#c2c2c2"/><rect x="921.5" y="234.7" width="14.5" height="4.9" fill="#c2c2c2"/><rect x="944.6" y="225.3" width="18.2" height="1" fill="#9a9a9a"/><rect x="947.4" y="227" width="4.9" height="13.8" fill="#c2c2c2"/><rect x="954.6" y="227" width="6.2" height="8.8" fill="#c2c2c2"/><rect x="969.5" y="232.7" width="18.2" height="1" fill="#9a9a9a"/><rect x="972.3" y="226.5" width="5.4" height="13.1" fill="#c2c2c2"/><rect x="980" y="228.8" width="5.8" height="9" fill="#c2c2c2"/><rect x="995.4" y="241" width="18.1" height="1" fill="#9a9a9a"/><rect x="998" y="227" width="5.4" height="13" fill="#c2c2c2"/><rect x="1005.4" y="231.6" width="6.6" height="8.4" fill="#c2c2c2"/><polyline points="1267.2,260.5 1271.6,265.3 1276,260.5" fill="none" stroke="#a0a0a0" stroke-width="1.1"/><polyline points="873.8,285 877.5,288.7 884,281.5" fill="none" stroke="#d8d8d8" stroke-width="1.8"/><g fill="#c8c8c8"><rect x="809.6" y="319" width="1.5" height="11.5"/><rect x="804" y="324" width="12.5" height="1.5"/><path d="M810.35,317 l2.6,3 h-5.2z M810.35,332 l2.6,-3 h-5.2z M803.5,324.75 l3,-2.6 v5.2z M817.2,324.75 l-3,-2.6 v5.2z"/></g><rect x="845.5" y="328.5" width="1.5" height="3" fill="#3f88d8"/><path d="M839.5,329 L861,317" stroke="#e41c1c" stroke-width="4" stroke-linecap="round"/><path d="M873.8,308.8 L857,313.8 L863.8,322.6z" fill="#e41c1c" stroke="#e41c1c" stroke-width="1" stroke-linejoin="round"/><g fill="none" stroke="#bdbdbd" stroke-width="1.3"><rect x="803.5" y="352" width="8" height="7.2"/><rect x="809" y="347.3" width="8.3" height="7.5"/><path d="M810,352 l4.5,-3.5 M811.5,348.5 h3.3 v3.2"/></g><g fill="none" stroke="#3b86d6" stroke-width="1.6"><rect x="869.4" y="347.5" width="5" height="7.5" rx="2.5"/><rect x="870.8" y="353.5" width="5" height="7.5" rx="2.5"/></g><path d="M969.2,351.5 A7,7 0 0 1 982.6,355.5" fill="none" stroke="#d0d0d0" stroke-width="1.6"/><path d="M966,348.6 l6.6,0.6 -4.2,5.6z" fill="#d0d0d0"/><path d="M982.4,358.2 A7,7 0 0 1 968.8,358" fill="none" stroke="#a8a8a8" stroke-width="1.3" stroke-dasharray="1.3,1.6"/><g fill="#c8c8c8"><rect x="803.50" y="377.70" width="2.17" height="2.17"/><rect x="803.50" y="382.04" width="2.17" height="2.17"/><rect x="803.50" y="386.38" width="2.17" height="2.17"/><rect x="805.67" y="379.87" width="2.17" height="2.17"/><rect x="805.67" y="384.21" width="2.17" height="2.17"/><rect x="805.67" y="388.55" width="2.17" height="2.17"/><rect x="807.84" y="377.70" width="2.17" height="2.17"/><rect x="807.84" y="382.04" width="2.17" height="2.17"/><rect x="807.84" y="386.38" width="2.17" height="2.17"/><rect x="810.01" y="379.87" width="2.17" height="2.17"/><rect x="810.01" y="384.21" width="2.17" height="2.17"/><rect x="810.01" y="388.55" width="2.17" height="2.17"/><rect x="812.18" y="377.70" width="2.17" height="2.17"/><rect x="812.18" y="382.04" width="2.17" height="2.17"/><rect x="812.18" y="386.38" width="2.17" height="2.17"/><rect x="814.35" y="379.87" width="2.17" height="2.17"/><rect x="814.35" y="384.21" width="2.17" height="2.17"/><rect x="814.35" y="388.55" width="2.17" height="2.17"/></g><circle cx="1269.6" cy="383.6" r="4.3" fill="#2a2a2a" stroke="#c0c0c0" stroke-width="1.7"/><g transform="translate(1260.5,427.8) scale(1.0)" fill="#c0c0c0"><path d="M1.5,1.5 a4.2,4.2 0 0 0 5.2,5.6 l6.6,6.6 a1.3,1.3 0 0 0 1.9,-1.9 l-6.6,-6.6 a4.2,4.2 0 0 0 -5.6,-5.2 l2.6,2.6 -0.6,2.1 -2.1,0.6z"/></g><polyline points="1258,459.4 1261.7,463.3 1265.4,459.4" fill="none" stroke="#a0a0a0" stroke-width="1.1"/><polyline points="970.5,490 974.7,493.6 978.9,490" fill="none" stroke="#a0a0a0" stroke-width="1.1"/><circle cx="1165.5" cy="492.5" r="4.3" fill="#2a2a2a" stroke="#c0c0c0" stroke-width="1.7"/><rect x="796.40" y="515.80" width="16.00" height="1.9" fill="#3b86d6"/><rect x="796.40" y="519.20" width="13.00" height="1.9" fill="#3b86d6"/><rect x="796.40" y="522.60" width="16.00" height="1.9" fill="#3b86d6"/><rect x="796.40" y="526.00" width="13.00" height="1.9" fill="#3b86d6"/><rect x="796.40" y="529.40" width="16.00" height="1.9" fill="#3b86d6"/><rect x="826.30" y="515.80" width="12.00" height="1.9" fill="#c0c0c0"/><rect x="824.30" y="519.20" width="16.00" height="1.9" fill="#c0c0c0"/><rect x="826.30" y="522.60" width="12.00" height="1.9" fill="#c0c0c0"/><rect x="824.30" y="526.00" width="16.00" height="1.9" fill="#c0c0c0"/><rect x="826.30" y="529.40" width="12.00" height="1.9" fill="#c0c0c0"/><rect x="855.30" y="515.80" width="13.00" height="1.9" fill="#c0c0c0"/><rect x="852.30" y="519.20" width="16.00" height="1.9" fill="#c0c0c0"/><rect x="855.30" y="522.60" width="13.00" height="1.9" fill="#c0c0c0"/><rect x="852.30" y="526.00" width="16.00" height="1.9" fill="#c0c0c0"/><rect x="855.30" y="529.40" width="13.00" height="1.9" fill="#c0c0c0"/><rect x="890.20" y="515.80" width="15.30" height="1.9" fill="#4e4e4e"/><rect x="890.20" y="519.20" width="15.30" height="1.9" fill="#4e4e4e"/><rect x="890.20" y="522.60" width="15.30" height="1.9" fill="#4e4e4e"/><rect x="890.20" y="526.00" width="15.30" height="1.9" fill="#4e4e4e"/><rect x="890.20" y="529.40" width="15.30" height="1.9" fill="#4e4e4e"/><rect x="918.20" y="515.80" width="15.30" height="1.9" fill="#4e4e4e"/><rect x="918.20" y="519.20" width="15.30" height="1.9" fill="#4e4e4e"/><rect x="918.20" y="522.60" width="15.30" height="1.9" fill="#4e4e4e"/><rect x="918.20" y="526.00" width="15.30" height="1.9" fill="#4e4e4e"/><rect x="918.20" y="529.40" width="15.30" height="1.9" fill="#4e4e4e"/><rect x="946.60" y="515.80" width="15.30" height="1.9" fill="#4e4e4e"/><rect x="946.60" y="519.20" width="15.30" height="1.9" fill="#4e4e4e"/><rect x="946.60" y="522.60" width="15.30" height="1.9" fill="#4e4e4e"/><rect x="946.60" y="526.00" width="15.30" height="1.9" fill="#4e4e4e"/><rect x="946.60" y="529.40" width="15.30" height="1.9" fill="#4e4e4e"/><rect x="975.50" y="515.80" width="15.30" height="1.9" fill="#4e4e4e"/><rect x="975.50" y="519.20" width="15.30" height="1.9" fill="#4e4e4e"/><rect x="975.50" y="522.60" width="15.30" height="1.9" fill="#4e4e4e"/><rect x="975.50" y="526.00" width="15.30" height="1.9" fill="#4e4e4e"/><rect x="975.50" y="529.40" width="15.30" height="1.9" fill="#4e4e4e"/><rect x="1013.60" y="515.60" width="15.20" height="1.7" fill="#c0c0c0"/><rect x="1013.60" y="518.90" width="15.20" height="1.7" fill="#c0c0c0"/><rect x="1013.60" y="522.20" width="15.20" height="1.7" fill="#c0c0c0"/><rect x="1042.00" y="518.60" width="15.00" height="1.7" fill="#c0c0c0"/><rect x="1042.00" y="521.90" width="15.00" height="1.7" fill="#c0c0c0"/><rect x="1042.00" y="525.20" width="15.00" height="1.7" fill="#c0c0c0"/><rect x="1070.40" y="523.20" width="14.60" height="1.7" fill="#c0c0c0"/><rect x="1070.40" y="526.50" width="14.60" height="1.7" fill="#c0c0c0"/><rect x="1070.40" y="529.80" width="14.60" height="1.7" fill="#c0c0c0"/><rect x="794.6" y="544" width="18.8" height="11" fill="#d0d0d0"/><text x="795.8" y="553.6" font-family="Liberation Sans" font-weight="bold" font-size="10.5" fill="#232323" textLength="16.5" lengthAdjust="spacingAndGlyphs">VA</text><path d="M795,559 h18.2 M797.3,556.8 l-2.3,2.2 2.3,2.2 M810.9,556.8 l2.3,2.2 -2.3,2.2" stroke="#d0d0d0" stroke-width="1.3" fill="none"/><text x="863.5" y="557" font-family="Liberation Sans" font-size="12.5" fill="#c8c8c8" textLength="18" lengthAdjust="spacingAndGlyphs">V/A</text><path d="M877,559.5 h-5 M873.8,557.8 l-1.8,1.7 1.8,1.7" stroke="#c8c8c8" stroke-width="1.2" fill="none"/><text x="940" y="550.5" font-family="Liberation Sans" font-size="9" fill="#c8c8c8">A</text><text x="940" y="560.5" font-family="Liberation Sans" font-size="9" fill="#c8c8c8">A</text><rect x="938.5" y="551.2" width="10" height="1" fill="#c8c8c8"/><rect x="938.5" y="561" width="10" height="1" fill="#c8c8c8"/><path d="M934.5,549.5 v11 M932.6,551.5 l1.9,-2.2 1.9,2.2 M932.6,558.5 l1.9,2.2 1.9,-2.2" stroke="#c8c8c8" stroke-width="1.3" fill="none"/><text x="1001" y="557.5" font-family="Liberation Sans" font-size="12" fill="#c8c8c8">A</text><text x="1010.5" y="552" font-family="Liberation Sans" font-size="7.5" fill="#c8c8c8">a</text><rect x="1001" y="558.3" width="9" height="1" fill="#c8c8c8"/><path d="M1013.5,555 v6 M1011.8,557 l1.7,-2 1.7,2" stroke="#c8c8c8" stroke-width="1.1" fill="none"/><path d="M1069.5,548.5 h13 M1080,546.4 l2.5,2.1 -2.5,2.1 M1084.5,545.5 v5.5" stroke="#c8c8c8" stroke-width="1.2" fill="none"/><rect x="1069.5" y="553.5" width="16.5" height="5" fill="#c8c8c8"/><g fill="#232323"><rect x="1071" y="556.5" width="0.9" height="2"/><rect x="1074" y="556.5" width="0.9" height="2"/><rect x="1077" y="556.5" width="0.9" height="2"/><rect x="1080" y="556.5" width="0.9" height="2"/><rect x="1083" y="556.5" width="0.9" height="2"/></g><text x="801" y="589.2" font-family="Liberation Serif" font-weight="bold" fill="#c8c8c8" font-size="15" textLength="12" lengthAdjust="spacingAndGlyphs">T</text><text x="823.5" y="589.2" font-family="Liberation Serif" font-style="italic" font-weight="bold" fill="#c8c8c8" font-size="15" textLength="13" lengthAdjust="spacingAndGlyphs">T</text><text x="851" y="589.2" font-family="Liberation Serif" font-weight="bold" fill="#c8c8c8" font-size="15" textLength="18" lengthAdjust="spacingAndGlyphs">TT</text><text x="875" y="589.2" font-family="Liberation Serif" font-weight="bold" fill="#c8c8c8" font-size="15">T</text><text x="885" y="589.2" font-family="Liberation Serif" font-weight="bold" fill="#c8c8c8" font-size="10.5">T</text><text x="906" y="589.2" font-family="Liberation Serif" font-weight="bold" fill="#c8c8c8" font-size="15">T</text><text x="916.5" y="583" font-family="Liberation Serif" font-weight="bold" fill="#c8c8c8" font-size="6.5">1</text><text x="930" y="589.2" font-family="Liberation Serif" font-weight="bold" fill="#c8c8c8" font-size="15">T</text><text x="940" y="591" font-family="Liberation Serif" font-weight="bold" fill="#c8c8c8" font-size="6.5">1</text><text x="956" y="587.5" font-family="Liberation Serif" font-weight="bold" fill="#c8c8c8" font-size="14">T</text><rect x="956" y="589.5" width="11" height="1.1" fill="#c8c8c8"/><path d="M993,577 l5.5,5.5 -5.5,5.5z" fill="#3b86d6"/><path d="M1003.5,576.5 h7.9 v13.5 h-1.8 v-12 h-1.4 v12 h-1.8 v-7 a3.3,3.3 0 0 1 -2.9,-6.5z" fill="#3b86d6"/><path d="M1022.8,576.5 h7.9 v13.5 h-1.8 v-12 h-1.4 v12 h-1.8 v-7 a3.3,3.3 0 0 1 -2.9,-6.5z" fill="#c8c8c8"/><path d="M1039.4,577 l-5.5,5.5 5.5,5.5z" fill="#c8c8c8"/><g fill="none" stroke="#c8c8c8" stroke-width="1.1" stroke-linecap="round"><path d="M1064.5,578.3 h7"/><path d="M1067.5,576.5 q-0.3,5 1.2,9"/><path d="M1070.5,580.2 q-3.5,4.5 -5.5,4.2 q-1.5,-0.5 0.2,-2.4 q3,-2.6 6,-1.2 q2.2,1.3 0.5,3.5 q-1,1 -2.5,1.2"/></g><path d="M1062,575.5 v11 M1077,575.5 v11" stroke="#a0a0a0" stroke-width="0.9" stroke-dasharray="1,1"/><path d="M1061,589 h4 M1063.5,587.5 l1.5,1.5 -1.5,1.5 M1078,589 h-4 M1075.5,587.5 l-1.5,1.5 1.5,1.5" stroke="#c8c8c8" stroke-width="1" fill="none"/></svg>
</body></html>
